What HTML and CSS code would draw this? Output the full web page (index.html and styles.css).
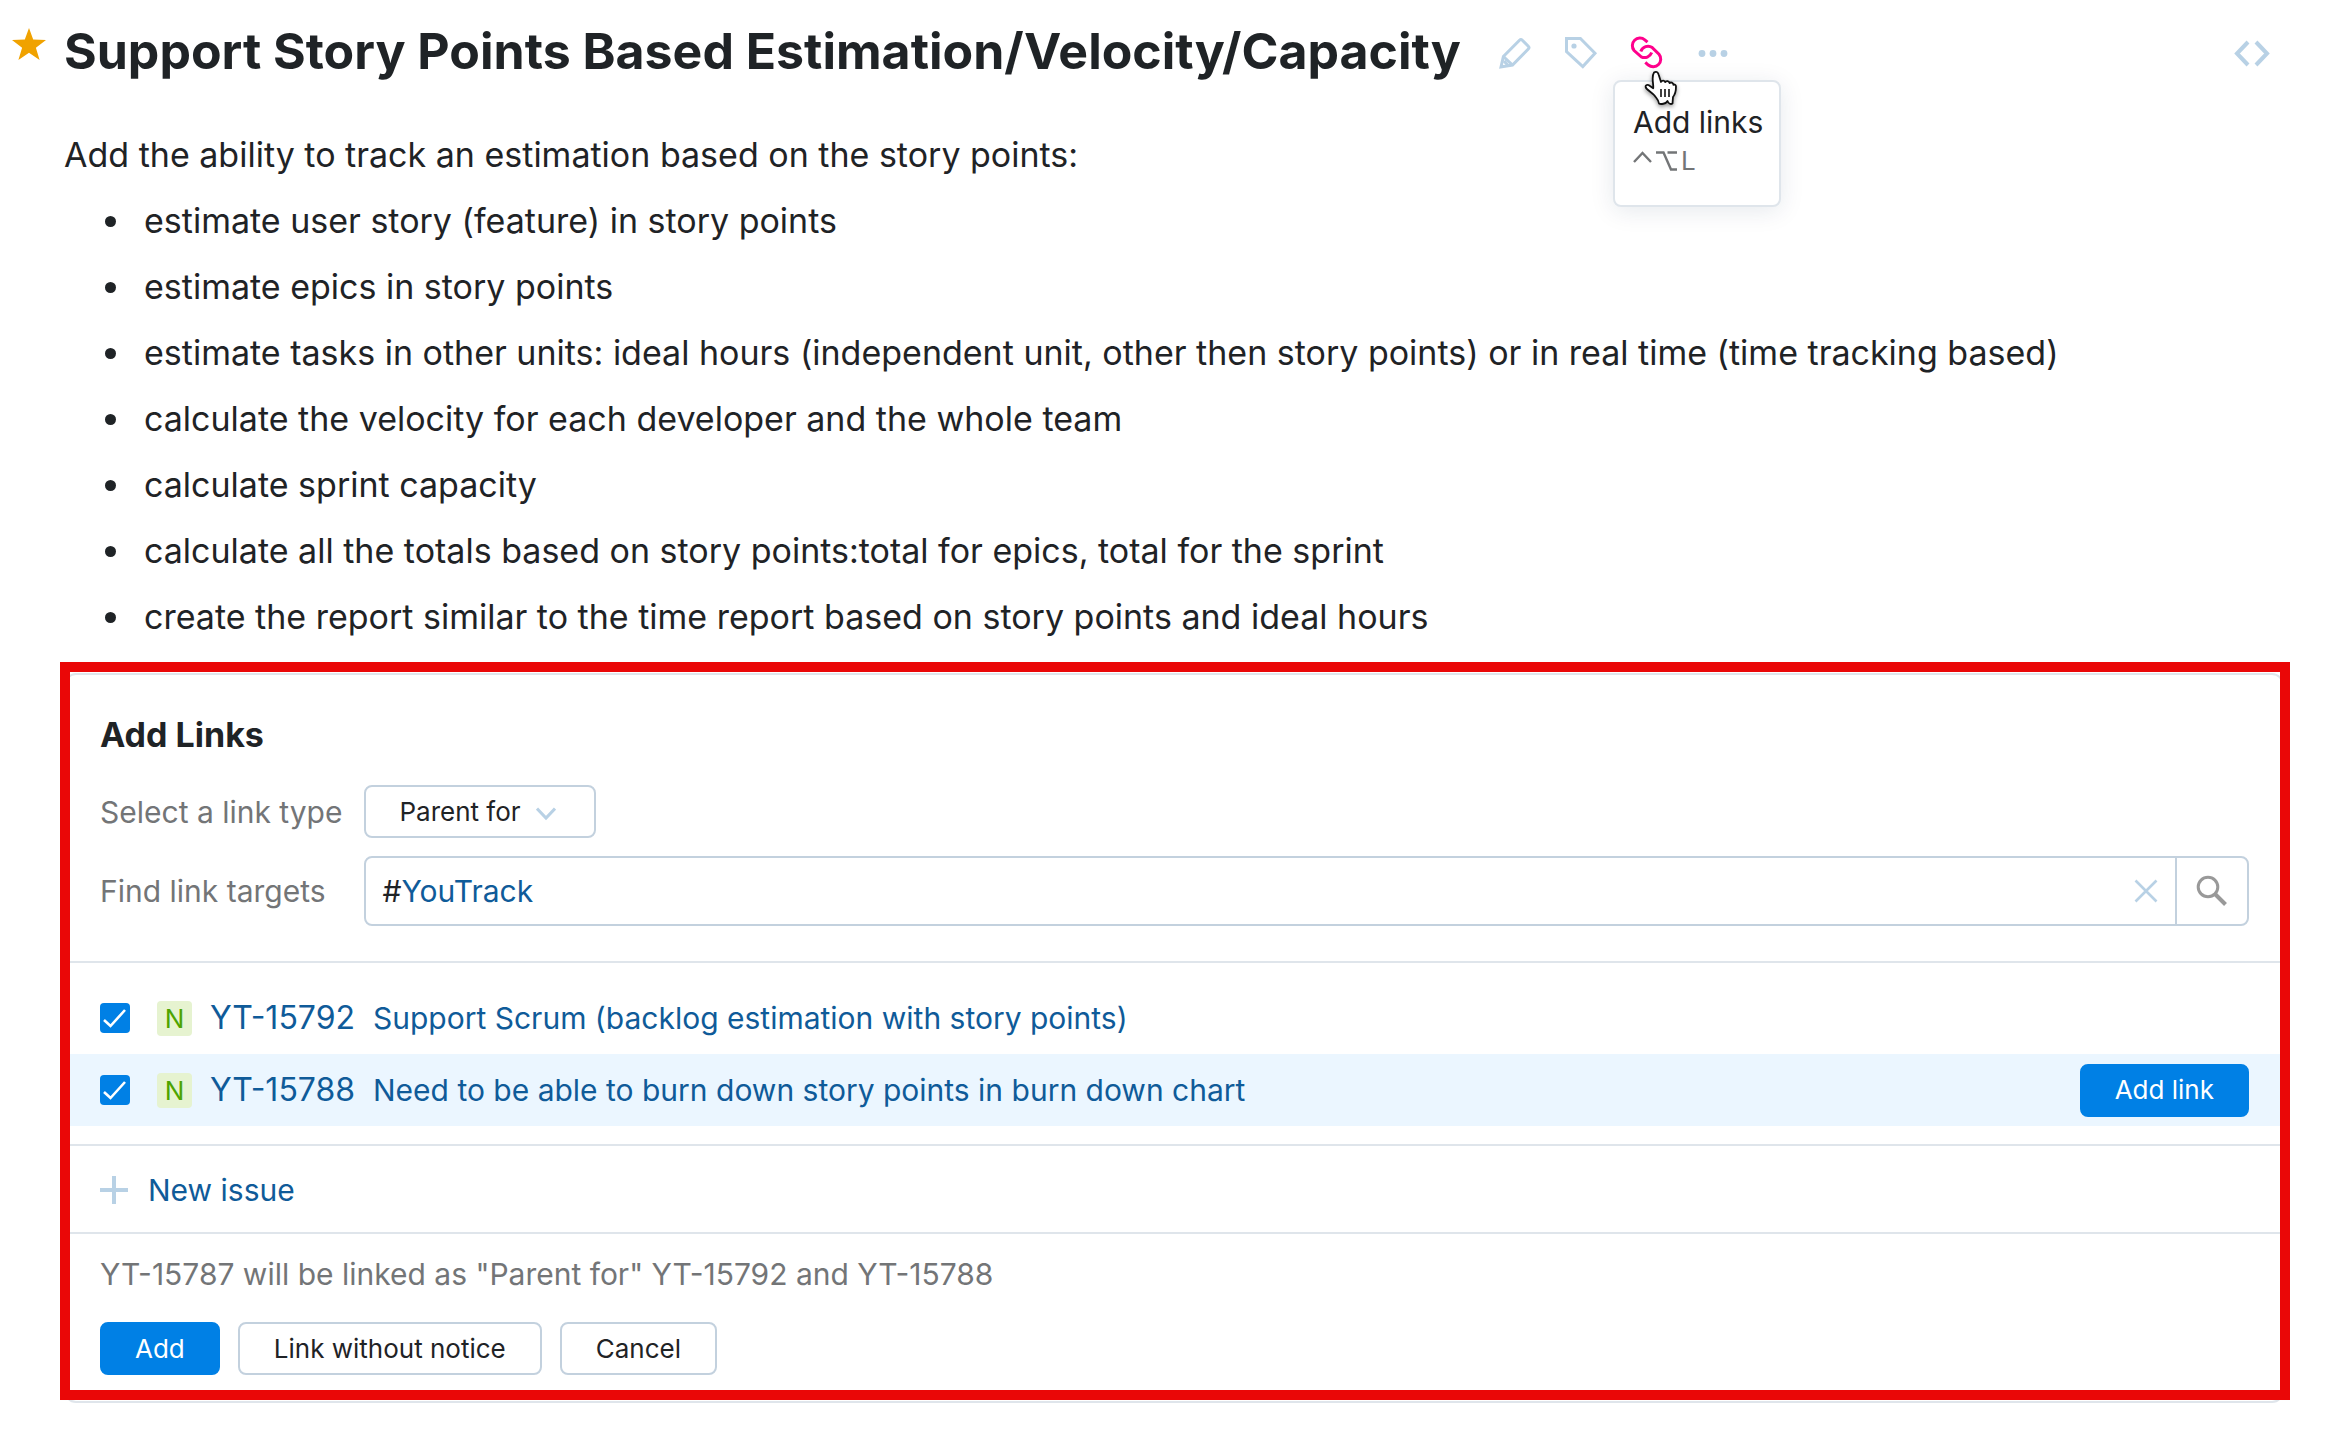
FILE: index.html
```html
<!DOCTYPE html>
<html lang="en">
<head>
<meta charset="utf-8">
<title>Support Story Points Based Estimation/Velocity/Capacity</title>
<link rel="stylesheet" href="styles.css">
</head>
<body>
<main class="issue">
  <header class="issue-header">
    <button class="icon-button star" aria-label="Unstar issue">
      <svg width="34" height="32" viewBox="0 0 34 32"><path fill="#f0a200" d="M17 0l4.2 11.6L34 12l-10.100 7.700L27.600 32 17 24.700 6.400 32l3.700-12.300L0 12l12.800-.4z"/></svg>
    </button>
    <h1 class="issue-title">Support Story Points Based Estimation/Velocity/Capacity</h1>
    <div class="toolbar">
      <button class="icon-button" aria-label="Edit">
        <svg width="34" height="34" viewBox="0 0 34 34" fill="none" stroke="#b8d1e5" stroke-width="3"><path d="M3 31l2.400-10.500L21.500 4.200a2 2 0 0 1 2.800 0L30.300 10.200a2 2 0 0 1 0 2.800L14.500 29z"/><path d="M5.400 20.500l9.100 8.500M6 25l4.500 5"/></svg>
      </button>
      <button class="icon-button" aria-label="Add tag">
        <svg width="34" height="34" viewBox="0 0 34 34"><path fill="none" stroke="#b8d1e5" stroke-width="3" d="M2.500 2.500H16.400L31 17.300 18.800 30.600 2.500 15.600z"/><circle cx="10" cy="10" r="2.600" fill="#b8d1e5"/></svg>
      </button>
      <div class="tooltip-anchor">
        <button class="icon-button" aria-label="Add links" aria-describedby="links-tip">
          <svg width="34" height="34" viewBox="0 0 34 34" fill="none" stroke="#ff008c" stroke-width="3"><path d="M17.500 6.200L14.800 3.800A7.600 7.600 0 0 0 4.100 14.500L11.200 20.800A7.600 7.600 0 0 0 21.700 16.600"/><path d="M10.800 15.500A7.600 7.600 0 0 1 22.300 11.600L29 18.300A7.600 7.600 0 0 1 18.300 29L15.300 26.300"/></svg>
        </button>
        <div class="tooltip" id="links-tip" role="tooltip">
          <span>Add links</span>
          <kbd class="shortcut" aria-label="Control Option L">
            <svg width="44" height="20" viewBox="0 0 44 20" fill="none" stroke="#737577" stroke-width="2.400"><path d="M1 11l8.500-9L18 11M23 1.500h7.500L38 18.500h6M34.500 1.500H44"/></svg>L
          </kbd>
        </div>
        <svg class="cursor" width="36" height="40" viewBox="0 0 36 40"><path fill="#fff" stroke="#111" stroke-width="1.800" stroke-linejoin="round" d="M10 3.500c2-1.500 4-.5 4.600 2L17 13c.8-2 3.800-1.800 4.300.2.800-1.700 4-1.200 4.300.9 1.200-1.300 3.700-.4 3.800 1.700.9-.8 2.600 0 2.600 1.700 0 4-.5 7.500-3 10.500l-.5 6.500c-1.500 1-4 .5-5-2.500-1.500 3-7 3.500-8.500 2.500-.5-4-2.500-5-4.500-8C8.500 24 3 21 1.800 18.500c-.7-2 .7-3 2.700-2.500l4.700 3.200C9.800 15 7 8 10 3.500z"/><path stroke="#111" stroke-width="1.600" d="M17 20v8M21 20v8M25 20v8"/></svg>
      </div>
      <button class="icon-button" aria-label="More">
        <svg width="34" height="34" viewBox="0 0 34 34" fill="#b8d1e5"><circle cx="6" cy="17.500" r="3.400"/><circle cx="17" cy="17.500" r="3.400"/><circle cx="28" cy="17.500" r="3.400"/></svg>
      </button>
    </div>
    <button class="icon-button code" aria-label="View source">
      <svg width="36" height="34" viewBox="0 0 36 34" fill="none" stroke="#b8d1e5" stroke-width="4"><path d="M14 6L3 17.500 14 29M22 6l11 11.500L22 29"/></svg>
    </button>
  </header>

  <section class="description">
    <p>Add the ability to track an estimation based on the story points:</p>
    <ul>
      <li>estimate user story (feature) in story points</li>
      <li>estimate epics in story points</li>
      <li>estimate tasks in other units: ideal hours (independent unit, other then story points) or in real time (time tracking based)</li>
      <li>calculate the velocity for each developer and the whole team</li>
      <li>calculate sprint capacity</li>
      <li>calculate all the totals based on story points:total for epics, total for the sprint</li>
      <li>create the report similar to the time report based on story points and ideal hours</li>
    </ul>
  </section>

  <form class="links-panel">
    <div class="search-block">
      <h2 class="panel-title">Add Links</h2>
      <div class="fields">
        <label for="link-type">Select a link type</label>
        <div class="select">
          <select id="link-type"><option>Parent for</option></select>
          <svg class="chevron" width="20" height="14" viewBox="0 0 20 14"><path fill="none" stroke="#b8d1e5" stroke-width="3" d="M1 1.500l9 9.500 9-9.500"/></svg>
        </div>
        <label for="targets">Find link targets</label>
        <div class="query">
          <span class="hash">#</span>
          <input id="targets" type="text" value="YouTrack">
          <button type="button" class="query-clear" aria-label="Clear">
            <svg width="24" height="24" viewBox="0 0 24 24"><path stroke="#b8d1e5" stroke-width="2.600" d="M1.500 1.500l21 21M22.500 1.500l-21 21"/></svg>
          </button>
          <button type="button" class="query-search" aria-label="Search">
            <svg width="32" height="32" viewBox="0 0 32 32" fill="none" stroke="#999"><circle cx="12" cy="12" r="9.800" stroke-width="3"/><path stroke-width="4" d="M18.500 18.500L29.500 29.500"/></svg>
          </button>
        </div>
      </div>
    </div>

    <div class="results">
      <div class="result">
        <input class="tick" type="checkbox" aria-label="Select YT-15792" checked>
        <span class="badge">N</span>
        <a class="result-id" href="#YT-15792">YT-15792</a>
        <a class="result-title" href="#YT-15792">Support Scrum (backlog estimation with story points)</a>
      </div>
      <div class="result result-active">
        <input class="tick" type="checkbox" aria-label="Select YT-15788" checked>
        <span class="badge">N</span>
        <a class="result-id" href="#YT-15788">YT-15788</a>
        <a class="result-title" href="#YT-15788">Need to be able to burn down story points in burn down chart</a>
        <button type="button" class="button button-primary">Add link</button>
      </div>
    </div>

    <div class="new-issue">
      <a href="#new"><svg width="28" height="28" viewBox="0 0 28 28"><path stroke="#b8d1e5" stroke-width="4" d="M14 0v28M0 14h28"/></svg>New issue</a>
    </div>

    <footer class="panel-footer">
      <p>YT-15787 will be linked as "Parent for" YT-15792 and YT-15788</p>
      <div class="actions">
        <button type="submit" class="button button-primary">Add</button>
        <button type="button" class="button">Link without notice</button>
        <button type="button" class="button">Cancel</button>
      </div>
    </footer>
  </form>
</main>
</body>
</html>
```
FILE: styles.css
```css
*,
*::before,
*::after {
  box-sizing: border-box;
}

body {
  margin: 0;
  background: #fff;
  color: #1f2326;
  font-family: Inter, "Liberation Sans", sans-serif;
  font-size: 30px;
  line-height: 36px;
}

h1, h2, p, ul {
  margin: 0;
}

button, input, select {
  font: inherit;
  color: inherit;
}

svg {
  display: block;
  flex: none;
}

a {
  color: #0f5b99;
  text-decoration: none;
}

.issue {
  padding: 20px 64px 0;
}

.issue-header {
  display: flex;
  align-items: center;
  height: 66px;
}

.icon-button {
  padding: 0;
  border: 0;
  background: none;
  cursor: pointer;
}

.star {
  margin: 0 18px 18px -52px;
}

.issue-title {
  padding-bottom: 4px;
  font-size: 50px;
  line-height: 62px;
  font-weight: 700;
  white-space: nowrap;
}

.toolbar {
  display: flex;
  gap: 32px;
  margin-left: 37px;
}

.code {
  margin-left: auto;
  margin-right: 14px;
}

.tooltip-anchor {
  display: flex;
  position: relative;
}

.tooltip {
  position: absolute;
  left: -17px;
  top: 44px;
  width: 168px;
  height: 127px;
  padding: 22px 18px;
  border: 2px solid #dfe5eb;
  border-radius: 8px;
  background: #fff;
  box-shadow: 0 4px 24px rgba(0, 42, 76, 0.1);
  white-space: nowrap;
}

.shortcut {
  display: flex;
  align-items: center;
  gap: 4px;
  margin-top: 3px;
  color: #737577;
  font-family: inherit;
  font-size: 26px;
}

.cursor {
  position: absolute;
  left: 14px;
  top: 33px;
  filter: drop-shadow(0 2px 2px rgba(0, 0, 0, 0.4));
}

.description {
  padding-top: 36px;
  font-size: 34px;
  line-height: 66px;
}

.description ul {
  padding-left: 70px;
}

.description li {
  padding-left: 10px;
}

.links-panel {
  position: relative;
  margin-top: 23px;
  border: 2px solid #dfe5eb;
  border-radius: 12px;
}

/* highlight frame drawn over the panel edges */
.links-panel::after {
  content: "";
  position: absolute;
  inset: -13px -8px 1px -6px;
  border: 10px solid #ea0707;
  pointer-events: none;
}

.search-block,
.new-issue,
.panel-footer {
  padding: 0 33px 0 34px;
}

.search-block {
  padding-top: 40px;
  padding-bottom: 35px;
  border-bottom: 2px solid #dfe5eb;
}

.panel-title {
  font-size: 34px;
  line-height: 40px;
  font-weight: 700;
}

.fields {
  display: grid;
  grid-template-columns: auto 1fr;
  align-items: center;
  gap: 18px 22px;
  margin-top: 30px;
  color: #737577;
}

.select {
  position: relative;
  justify-self: start;
  color: #1f2326;
  font-size: 26px;
}

.select select {
  width: 232px;
  height: 53px;
  padding: 0 33px;
  border: 2px solid #c3d1de;
  border-radius: 8px;
  appearance: none;
  background: none;
}

.chevron {
  position: absolute;
  right: 40px;
  top: 22px;
  pointer-events: none;
}

.query {
  display: flex;
  align-items: center;
  height: 70px;
  padding-left: 16px;
  border: 2px solid #c3d1de;
  border-radius: 8px;
  color: #1f2326;
}

.query input {
  flex: 1;
  min-width: 0;
  padding: 0;
  border: 0;
  outline: 0;
  background: none;
  color: #0f5b99;
}

.query-clear,
.query-search {
  padding: 0 17px;
  border: 0;
  background: none;
}

.query-search {
  align-self: stretch;
  padding: 0 19px;
  border-left: 2px solid #c3d1de;
}

.results {
  padding: 19px 0 18px;
  border-bottom: 2px solid #dfe5eb;
}

.result {
  display: flex;
  align-items: center;
  height: 72px;
  padding: 0 33px 0 34px;
}

.result-active {
  background: #ebf6ff;
}

.result .button {
  margin-left: auto;
}

.tick {
  width: 30px;
  height: 30px;
  margin: 0 27px 0 0;
  border-radius: 4px;
  appearance: none;
  background: #0080e5 url("data:image/svg+xml,%3Csvg xmlns='http://www.w3.org/2000/svg' viewBox='0 0 30 30'%3E%3Cpath d='M4 17l6.500 6L25 7' fill='none' stroke='%23fff' stroke-width='2.600'/%3E%3C/svg%3E");
}

.badge {
  width: 35px;
  height: 35px;
  margin-right: 18px;
  border-radius: 4px;
  background: #e6f3d0;
  color: #4da400;
  font-size: 26px;
  line-height: 35px;
  text-align: center;
}

.result-id {
  width: 163px;
  font-size: 32px;
}

.new-issue {
  padding-top: 26px;
  padding-bottom: 24px;
  border-bottom: 2px solid #dfe5eb;
}

.new-issue a {
  display: flex;
  align-items: center;
  gap: 20px;
}

.panel-footer {
  padding-top: 22px;
  padding-bottom: 26px;
  color: #737577;
}

.actions {
  display: flex;
  gap: 18px;
  margin-top: 30px;
}

.button {
  height: 53px;
  padding: 0 34px;
  border: 2px solid #c3d1de;
  border-radius: 8px;
  background: #fff;
  color: #1f2326;
  font-size: 26px;
  line-height: 32px;
}

.button-primary {
  padding: 0 33px;
  border-color: #0080e5;
  background: #0080e5;
  color: #fff;
}
```
